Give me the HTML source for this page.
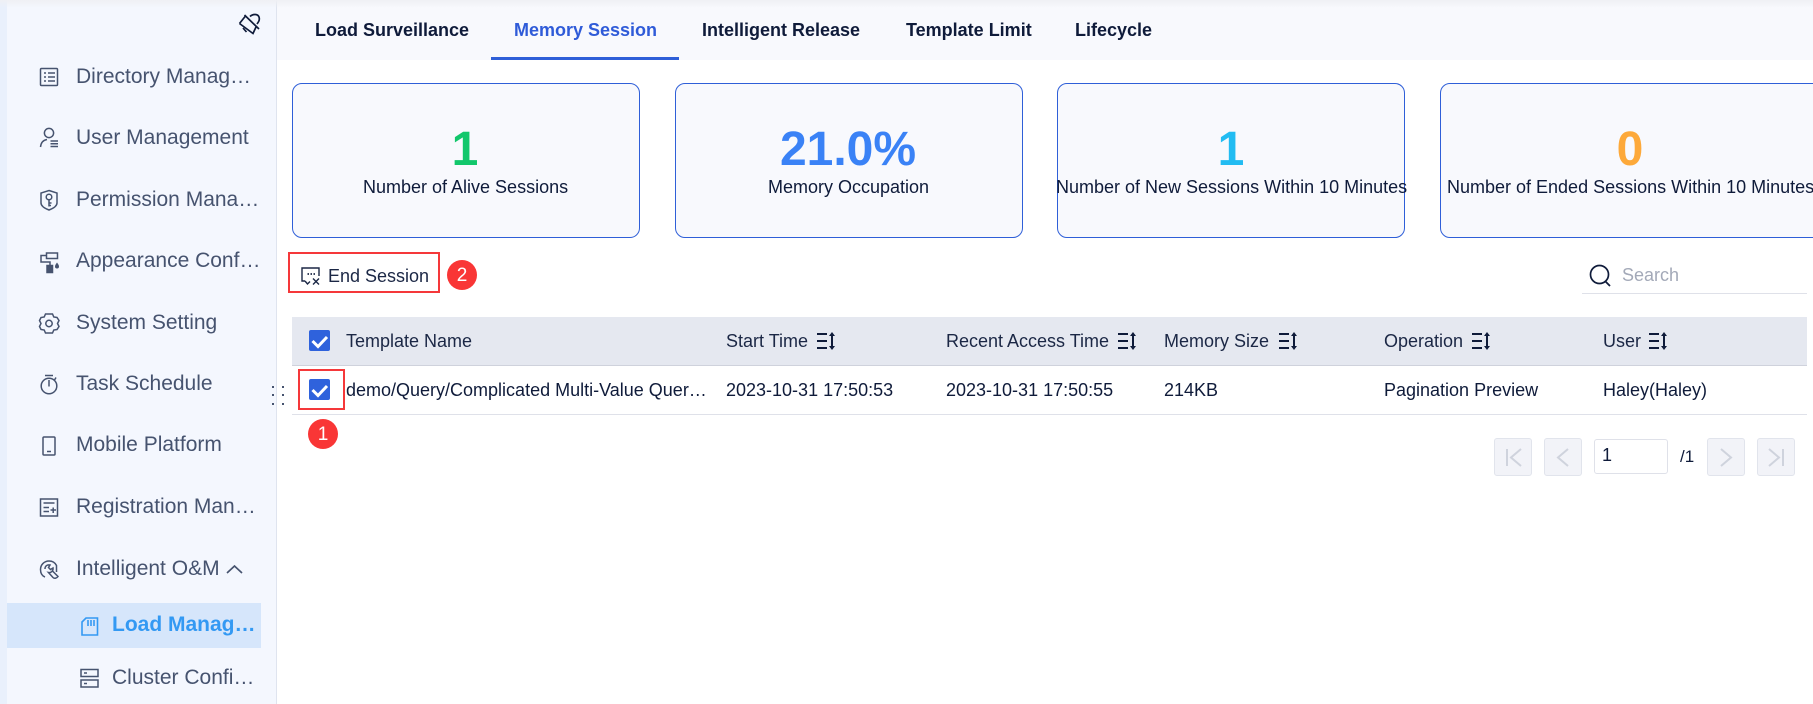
<!DOCTYPE html>
<html><head><meta charset="utf-8"><style>
html,body{margin:0;padding:0;background:#fff}
body{width:1813px;height:704px;overflow:hidden;position:relative;font-family:"Liberation Sans",Arial,sans-serif;color:#0f1b3a}
.a{position:absolute;white-space:nowrap}
.s{left:76px;font-size:21px;line-height:24px;color:#46536f}
.t{top:18px;font-size:18px;line-height:24px;font-weight:700;color:#0f1b3a}
.c{position:absolute;top:83px;width:346px;height:153px;border:1px solid #2f5fd8;border-radius:10px;background:#f8f9fd}
.n{top:123px;font-size:48px;line-height:54px;font-weight:700;text-align:center}
.l{top:175px;font-size:18px;line-height:24px;color:#0f1b3a}
.h{top:329px;font-size:18px;line-height:24px;color:#1b2745}
.r{top:378px;font-size:18px;line-height:24px;color:#0f1b3a}
.b{position:absolute;top:438px;width:36px;height:36px;border:1px solid #e1e4ec;border-radius:3px;background:#f2f3f8}
.k{position:absolute;width:21px;height:21px;border-radius:2px;background:#2f62dc}
.m{position:absolute;width:30px;height:30px;border-radius:50%;background:#f93636;color:#fff;font-size:19px;line-height:31px;text-align:center}
</style></head><body>
<div class="a" style="left:0;top:0;width:7px;height:704px;background:#e9f0fc"></div>
<div class="a" style="left:7px;top:0;width:269px;height:704px;background:#f4f7fe;border-right:1px solid #dfe4ef"></div>
<div class="a" style="left:277px;top:0;width:1536px;height:60px;background:#f8f9fd"></div>
<div class="a" style="left:0;top:0;width:1813px;height:8px;background:linear-gradient(#eff0f4,rgba(244,246,250,0))"></div>
<div class="a" style="left:7px;top:603px;width:254px;height:45px;background:#d6e6fb"></div>

<div class="a s" style="top:65px">Directory Manag…</div>
<div class="a s" style="top:126px">User Management</div>
<div class="a s" style="top:188px">Permission Mana…</div>
<div class="a s" style="top:249px">Appearance Conf…</div>
<div class="a s" style="top:311px">System Setting</div>
<div class="a s" style="top:372px">Task Schedule</div>
<div class="a s" style="top:433px">Mobile Platform</div>
<div class="a s" style="top:495px">Registration Man…</div>
<div class="a s" style="top:557px">Intelligent O&amp;M</div>
<div class="a s" style="left:112px;top:613px;font-weight:700;color:#3399f3">Load Manag…</div>
<div class="a s" style="left:112px;top:666px">Cluster Confi…</div>

<div class="a t" style="left:315px">Load Surveillance</div>
<div class="a t" style="left:514px;color:#2f5bd8">Memory Session</div>
<div class="a t" style="left:702px">Intelligent Release</div>
<div class="a t" style="left:906px">Template Limit</div>
<div class="a t" style="left:1075px">Lifecycle</div>
<div class="a" style="left:491px;top:57px;width:188px;height:3px;background:#2f5fd8"></div>

<div class="c" style="left:292px"></div>
<div class="c" style="left:675px"></div>
<div class="c" style="left:1057px"></div>
<div class="c" style="left:1440px;width:400px"></div>
<div class="a n" style="left:292px;width:346px;color:#12c76b">1</div>
<div class="a n" style="left:675px;width:346px;color:#3a82f6">21.0%</div>
<div class="a n" style="left:1057px;width:348px;color:#22bcf2">1</div>
<div class="a n" style="left:1440px;width:380px;color:#fda93a">0</div>
<div class="a l" style="left:363px">Number of Alive Sessions</div>
<div class="a l" style="left:768px">Memory Occupation</div>
<div class="a l" style="left:1056px">Number of New Sessions Within 10 Minutes</div>
<div class="a l" style="left:1447px">Number of Ended Sessions Within 10 Minutes</div>

<div class="a" style="left:288px;top:252px;width:148px;height:37px;border:2px solid #f5383a"></div>
<div class="a" style="left:328px;top:264px;font-size:18px;line-height:24px;color:#1b2745">End Session</div>
<div class="m" style="left:447px;top:260px">2</div>

<div class="a" style="left:1582px;top:293px;width:225px;height:1px;background:#dfe1e9"></div>
<div class="a" style="left:1622px;top:263px;font-size:18px;line-height:24px;color:#a3a9b8">Search</div>

<div class="a" style="left:292px;top:317px;width:1515px;height:48px;background:#e5e8f0;border-bottom:1px solid #cfd2dc;box-sizing:content-box"></div>
<div class="a" style="left:292px;top:414px;width:1515px;height:1px;background:#dfe1e9"></div>
<div class="k" style="left:309px;top:330px"></div>
<div class="k" style="left:309px;top:379px"></div>
<div class="a" style="left:298px;top:369px;width:43px;height:37px;border:2px solid #f5383a"></div>
<div class="m" style="left:308px;top:419px">1</div>

<div class="a h" style="left:346px">Template Name</div>
<div class="a h" style="left:726px">Start Time</div>
<div class="a h" style="left:946px">Recent Access Time</div>
<div class="a h" style="left:1164px">Memory Size</div>
<div class="a h" style="left:1384px">Operation</div>
<div class="a h" style="left:1603px">User</div>
<div class="a r" style="left:346px">demo/Query/Complicated Multi-Value Quer…</div>
<div class="a r" style="left:726px">2023-10-31 17:50:53</div>
<div class="a r" style="left:946px">2023-10-31 17:50:55</div>
<div class="a r" style="left:1164px">214KB</div>
<div class="a r" style="left:1384px">Pagination Preview</div>
<div class="a r" style="left:1603px">Haley(Haley)</div>

<div class="b" style="left:1494px"></div>
<div class="b" style="left:1544px"></div>
<div class="a" style="left:1594px;top:439px;width:72px;height:33px;border:1px solid #dfe1e9;border-radius:3px;background:#fff"></div>
<div class="a" style="left:1602px;top:443px;font-size:18px;line-height:24px">1</div>
<div class="a" style="left:1680px;top:445px;font-size:17px;line-height:24px">/1</div>
<div class="b" style="left:1707px"></div>
<div class="b" style="left:1757px"></div>

<svg class="a" style="left:0;top:0" width="1813" height="704" viewBox="0 0 1813 704" fill="none">
<defs><g id="so">
<path d="M0 334H10M0 341H10M0 348H10" stroke="#0f1b3a" stroke-width="2"/>
<path d="M15 334V348" stroke="#0f1b3a" stroke-width="2"/>
<path d="M12 336L15 332L18 336ZM12 346L15 350L18 346Z" fill="#0f1b3a"/>
</g></defs>
<!-- pin -->
<path d="M244.5 15L259 29M239.5 23.5L245.5 16M239.5 23.5L253 33.5L256 27M243 28L246.5 32M250 16.5C253 13.5 258 14 259 17C260 20 258.5 22 257 24" stroke="#0f1b3a" stroke-width="1.7"/>
<g stroke="#46536f" stroke-width="1.5">
<!-- directory -->
<rect x="40.5" y="68.5" width="17" height="17" rx="1"/>
<path d="M44 73H46M48 73H55M44 77H46M48 77H55M44 81H46M48 81H55"/>
<!-- user -->
<circle cx="49" cy="133" r="4.6"/>
<path d="M40.5 147C41 142.5 43.5 140 47 139.5M50.5 141H58M50.5 143.7H58M50.5 146.5H58"/>
<!-- permission -->
<path d="M49 190.5L57 193V203C57 206 53 208.5 49 210C45 208.5 41 206 41 203V193Z"/>
<circle cx="49" cy="197" r="2.8"/>
<path d="M49 200V206.5M49 203H51.5M49 205.5H51"/>
<!-- appearance -->
<path d="M46.5 253H57.5V258.5H46.5Z"/>
<path d="M46.5 255.5H41V262H50V266"/>
<rect x="47" y="265.5" width="5.5" height="7" fill="#46536f"/>
<path d="M57 262.5C58.5 264.5 59 265.5 59 266.5A2 2 0 0 1 55 266.5C55 265.5 55.5 264.5 57 262.5Z" fill="#46536f" stroke="none"/>
<!-- system -->
<path d="M45.5 314H52.5L53.8 317L57 317.5L59 320.5L57.5 323.5L59 326.5L57 329.5L53.8 330L52.5 333H45.5L44.2 330L41 329.5L39.5 326.5L41 323.5L39.5 320.5L41 317.5L44.2 317Z"/>
<circle cx="49" cy="323.5" r="3.2"/>
<!-- task -->
<circle cx="49" cy="386" r="7.8"/>
<path d="M45 375.5H53M49 380V386.5M56 377.5L54.5 380"/>
<!-- mobile -->
<rect x="43" y="437" width="12" height="18" rx="1"/>
<path d="M47 451.5H51"/>
<!-- registration -->
<rect x="40.5" y="499" width="17" height="17"/>
<path d="M43.5 503H54.5M43.5 507.5H49M43.5 511.5H49M50.5 510H56M53.2 507.5V513"/>
<!-- intelligent -->
<path d="M56.5 572V565.5C55 562.5 52 561 49 561C44 561 40.5 565 40.5 569.5C40.5 573.5 42.5 576 45 577"/>
<path d="M45 569C45 566 47 564.5 50 565L48.5 567.5L50.5 569.5L53 568C53.5 571 51 573 48.5 572.5L53 577.5C54.5 579 57 578 58 576.5L52 570.5"/>
<!-- chevron -->
<path d="M227 573L234.5 566L242 573" stroke-width="1.7"/>
<!-- cluster -->
<rect x="81" y="669.5" width="17" height="7"/><rect x="81" y="680" width="17" height="7"/>
<path d="M84 673H87M84 683.5H87"/>
</g>
<!-- load -->
<path d="M86 618H97.5V635H82V622ZM88 620V626M91 620V626M94 620V626" stroke="#3399f3" stroke-width="1.6"/>
<!-- drag dots -->
<g fill="#46536f"><rect x="272" y="386" width="2" height="2"/><rect x="272" y="394" width="2" height="2"/><rect x="272" y="403" width="2" height="2"/><rect x="282" y="386" width="2" height="2"/><rect x="282" y="394" width="2" height="2"/><rect x="282" y="403" width="2" height="2"/></g>
<!-- end session icon -->
<path d="M305 281H302V268H319V276M305 281L307.5 284L310 281.5M313 278.5L319 284.5M319 278.5L313 284.5" stroke="#1b2745" stroke-width="1.4"/>
<path d="M307.5 274H309M310.5 274H312M313.5 274H315" stroke="#1b2745" stroke-width="1.8"/>
<!-- search -->
<circle cx="1599.5" cy="274.5" r="9" stroke="#0f1b3a" stroke-width="1.7"/><path d="M1605.5 281.5L1610 286" stroke="#0f1b3a" stroke-width="1.8"/>
<!-- checks -->
<path d="M312.5 341L318 346.5L327 337M312.5 390L318 395.5L327 386" stroke="#fff" stroke-width="3"/>
<!-- sort icons -->
<use href="#so" x="817"/><use href="#so" x="1118"/><use href="#so" x="1279"/><use href="#so" x="1472"/><use href="#so" x="1649"/>
<!-- pagination -->
<g stroke="#cfd3dd" stroke-width="2">
<path d="M1507 449V466M1521 449L1511 457.5L1521 466"/>
<path d="M1568 449L1558 457.5L1568 466"/>
<path d="M1721 449L1731 457.5L1721 466"/>
<path d="M1769 449L1779 457.5L1769 466M1783 449V466"/>
</g>
</svg>
</body></html>
